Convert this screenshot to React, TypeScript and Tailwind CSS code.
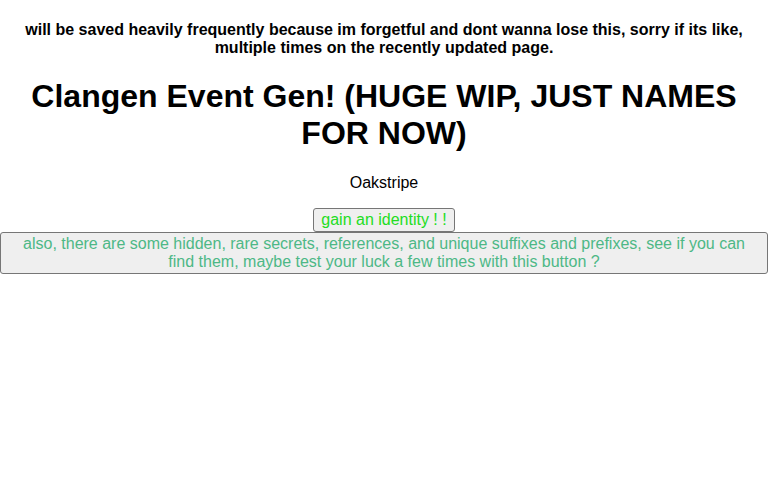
export default function App() {
  return (
    <div className="w-[768px] h-[480px] bg-white text-black text-center font-['Liberation_Sans',Arial,sans-serif]">
      <h4 className="pt-[21px] px-6 text-base font-bold leading-[18px]">
        will be saved heavily frequently because im forgetful and dont wanna lose this, sorry if its like, multiple times on the recently updated page.
      </h4>
      <h1 className="mt-[21px] px-6 text-[32px] font-bold leading-[37px]">
        Clangen Event Gen! (HUGE WIP, JUST NAMES FOR NOW)
      </h1>
      <p className="mt-[22px] text-base leading-[18px]">Oakstripe</p>
      <div className="mt-4 flex flex-col items-center">
        <button className="h-6 px-[7px] bg-[#efefef] border border-[#767676] rounded-[3px] text-base leading-[18px] text-[#22dd22]">
          gain an identity ! !
        </button>
        <button className="w-full px-4 py-[2px] bg-[#efefef] border border-[#767676] rounded-[3px] text-base leading-[18px] text-[#4db886]">
          also, there are some hidden, rare secrets, references, and unique suffixes and prefixes, see if you can find them, maybe test your luck a few times with this button ?
        </button>
      </div>
    </div>
  );
}
